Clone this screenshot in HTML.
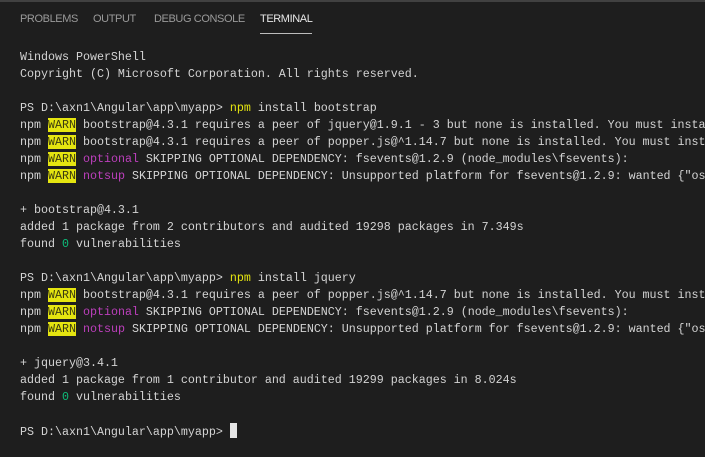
<!DOCTYPE html>
<html><head><meta charset="utf-8"><style>
html,body{margin:0;padding:0;background:#1e1e1e;width:705px;height:457px;overflow:hidden}
.top{position:absolute;left:0;top:0;width:705px;height:2px;background:#414141}
.tab{position:absolute;top:13px;font:11px "Liberation Sans",sans-serif;color:#9a9a9a;letter-spacing:-0.4px;white-space:nowrap}
.act{color:#e7e7e7}
.ul{position:absolute;left:260px;top:33px;width:52px;height:1px;background:#bcbcbc}
.t{position:absolute;left:20px;top:49px;font:11.67px/17px "Liberation Mono",monospace;color:#d4d4d4;white-space:pre}
.y{color:#e5e510}.m{color:#bc3fbc}.g{color:#0dbc79}
.w{background:#e5e510;color:#3a3a10}
.cur{display:inline-block;width:7px;height:15px;background:#e5e5e5;vertical-align:-3px}
</style></head><body>
<div class="top"></div>
<div class="tab" style="left:20px">PROBLEMS</div>
<div class="tab" style="left:93px">OUTPUT</div>
<div class="tab" style="left:154px">DEBUG CONSOLE</div>
<div class="tab act" style="left:260px">TERMINAL</div>
<div class="ul"></div>
<div class="t">Windows PowerShell
Copyright (C) Microsoft Corporation. All rights reserved.

PS D:\axn1\Angular\app\myapp> <span class="y">npm</span> install bootstrap
npm <span class="w">WARN</span> bootstrap@4.3.1 requires a peer of jquery@1.9.1 - 3 but none is installed. You must install
npm <span class="w">WARN</span> bootstrap@4.3.1 requires a peer of popper.js@^1.14.7 but none is installed. You must install
npm <span class="w">WARN</span> <span class="m">optional</span> SKIPPING OPTIONAL DEPENDENCY: fsevents@1.2.9 (node_modules\fsevents):
npm <span class="w">WARN</span> <span class="m">notsup</span> SKIPPING OPTIONAL DEPENDENCY: Unsupported platform for fsevents@1.2.9: wanted {"os"

+ bootstrap@4.3.1
added 1 package from 2 contributors and audited 19298 packages in 7.349s
found <span class="g">0</span> vulnerabilities

PS D:\axn1\Angular\app\myapp> <span class="y">npm</span> install jquery
npm <span class="w">WARN</span> bootstrap@4.3.1 requires a peer of popper.js@^1.14.7 but none is installed. You must install
npm <span class="w">WARN</span> <span class="m">optional</span> SKIPPING OPTIONAL DEPENDENCY: fsevents@1.2.9 (node_modules\fsevents):
npm <span class="w">WARN</span> <span class="m">notsup</span> SKIPPING OPTIONAL DEPENDENCY: Unsupported platform for fsevents@1.2.9: wanted {"os"

+ jquery@3.4.1
added 1 package from 1 contributor and audited 19299 packages in 8.024s
found <span class="g">0</span> vulnerabilities

PS D:\axn1\Angular\app\myapp> <span class="cur"></span></div>
</body></html>
